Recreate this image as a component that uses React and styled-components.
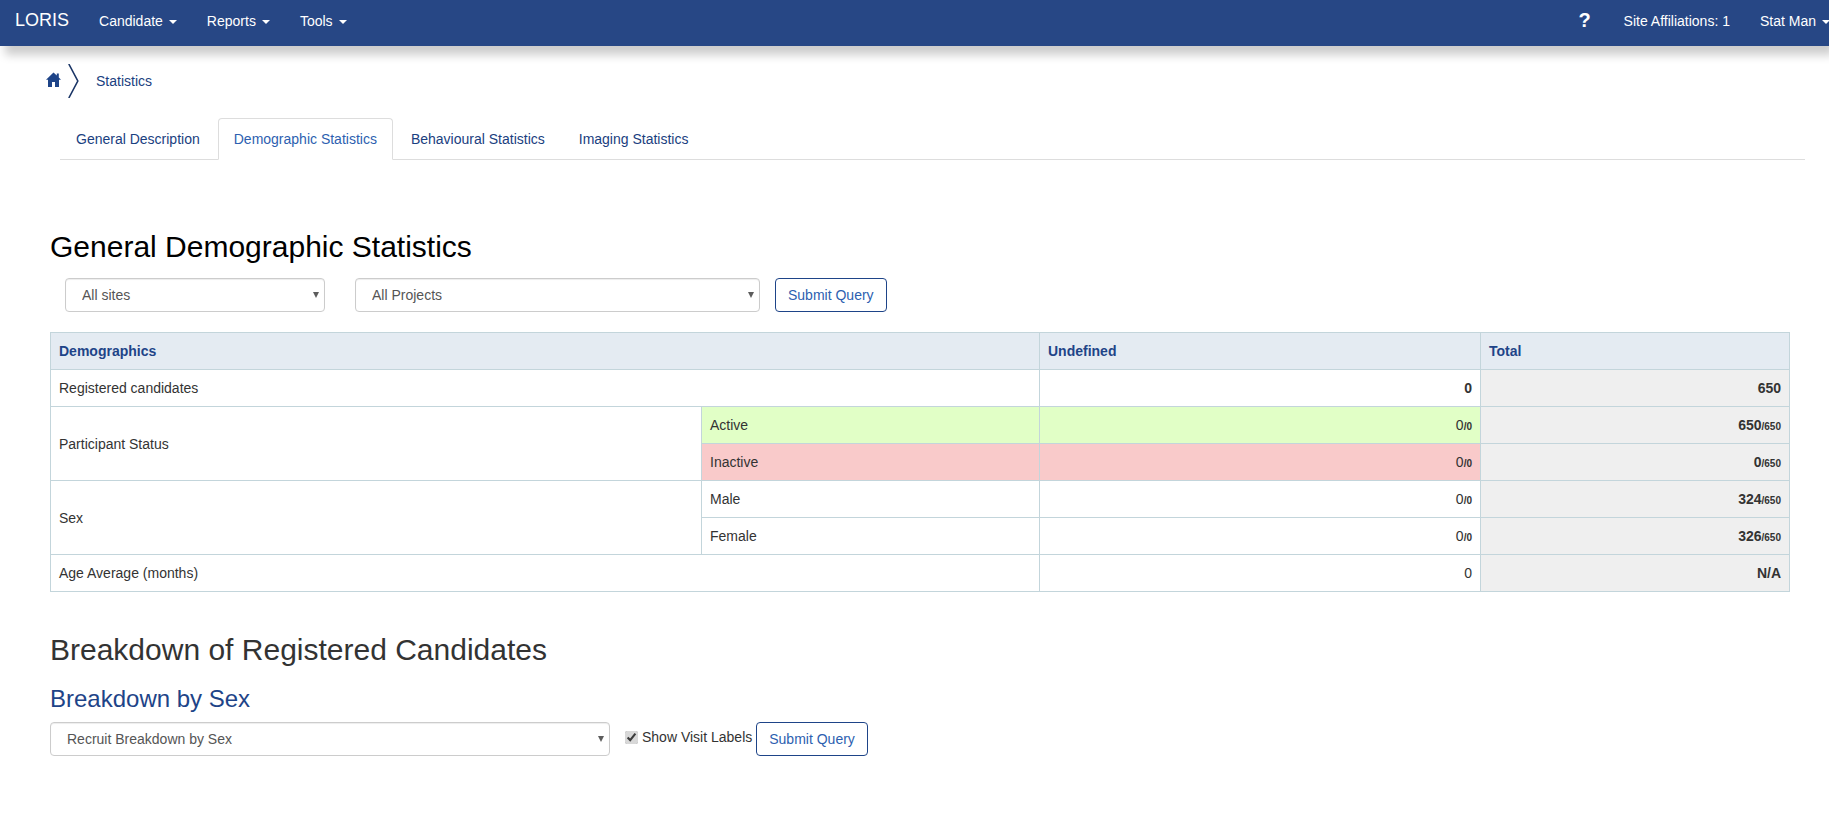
import React from 'react'
import styled, { createGlobalStyle } from 'styled-components'

const GlobalStyle = createGlobalStyle`
  html, body {
    margin: 0;
    padding: 0;
    background: #fff;
    overflow-x: hidden;
  }
  body {
    font-family: "Liberation Sans", Arial, sans-serif;
    font-size: 14px;
    line-height: 20px;
    color: #333;
  }
  * { box-sizing: border-box; }
`

const Page = styled.div`
  min-height: 820px;
  overflow: hidden;
`

const Navbar = styled.nav`
  display: flex;
  align-items: flex-start;
  justify-content: space-between;
  height: 46px;
  background: #274785;
  box-shadow: 5px 9px 9px rgba(0, 0, 0, 0.2);
  color: #fff;
`

const NavGroup = styled.div`
  display: flex;
  align-items: flex-start;
  margin-right: ${p => (p.$right ? '-16px' : '0')};
`

const Brand = styled.a`
  padding: 0 15px;
  font-size: 18px;
  line-height: 40px;
`

const NavLink = styled.a`
  display: block;
  padding: 0 15px;
  line-height: 42px;
  white-space: nowrap;
`

const HelpLink = styled(NavLink)`
  font-size: 20px;
  font-weight: 700;
  padding: 0 18px 0 0;
  line-height: 40px;
`

const Caret = styled.span`
  display: inline-block;
  width: 0;
  height: 0;
  margin-left: 6px;
  vertical-align: middle;
  border-top: 4px solid currentColor;
  border-left: 4px solid transparent;
  border-right: 4px solid transparent;
`

const Breadcrumb = styled.div`
  display: flex;
  align-items: center;
  height: 34px;
  margin: 18px 0 0 46px;
`

const HomeMark = styled.svg`
  margin-bottom: 3px;
`

const ChevronMark = styled.svg`
  margin-left: 7px;
`

const Crumb = styled.a`
  margin-left: 17px;
  color: #1a4080;
`

const Tabs = styled.ul`
  display: flex;
  list-style: none;
  margin: 20px 24px 0 60px;
  padding: 0;
  height: 42px;
  border-bottom: 1px solid #ddd;
`

const Tab = styled.li`
  height: 42px;
  padding: 10px 15px;
  margin-right: 2px;
  border: 1px solid ${p => (p.$active ? '#ddd' : 'transparent')};
  border-bottom-color: ${p => (p.$active ? '#fff' : 'transparent')};
  border-radius: 4px 4px 0 0;
  background: ${p => (p.$active ? '#fff' : 'transparent')};
  color: ${p => (p.$active ? '#2d5fb0' : '#1a4080')};
`

const Content = styled.main`
  padding: 0 38px 0 50px;
`

const Title = styled.h2`
  margin: ${p => p.$top}px 0 0;
  font-size: 30px;
  font-weight: 500;
  line-height: 33px;
  color: ${p => p.$color || '#000'};
`

const SubTitle = styled.h3`
  margin: 20px 0 0;
  font-size: 24px;
  font-weight: 500;
  line-height: 26px;
  color: #1e4488;
`

const FilterRow = styled.form`
  display: flex;
  align-items: center;
  margin-top: ${p => p.$top}px;
  padding-left: ${p => p.$indent || 0}px;
`

const SelectWrap = styled.div`
  position: relative;
  width: ${p => p.$width}px;
  margin-right: ${p => p.$gap}px;
  &::after {
    content: '';
    position: absolute;
    top: 14px;
    right: 6px;
    border-top: 6px solid #5c5c5c;
    border-left: 3px solid transparent;
    border-right: 3px solid transparent;
    pointer-events: none;
  }
`

const Select = styled.select`
  display: block;
  width: 100%;
  height: 34px;
  padding: 6px 16px;
  background: #fff;
  border: 1px solid #ccc;
  border-radius: 4px;
  box-shadow: inset 0 1px 1px rgba(0, 0, 0, 0.075);
  color: #555;
  font: 14px/20px "Liberation Sans", Arial, sans-serif;
  appearance: none;
`

const SubmitButton = styled.button`
  height: 34px;
  padding: 6px 12px;
  background: #fff;
  border: 1px solid #1e4488;
  border-radius: 4px;
  color: #2d5fb0;
  font: 14px/20px "Liberation Sans", Arial, sans-serif;
  white-space: nowrap;
`

const CheckLabel = styled.label`
  display: flex;
  align-items: center;
  margin-right: 4px;
  position: relative;
  top: -2px;
  white-space: nowrap;
`

const Check = styled.input`
  width: 13px;
  height: 13px;
  margin: 0 4px 0 0;
  accent-color: #d8d8d8;
`

const StatsTable = styled.table`
  width: 1739px;
  margin-top: 20px;
  table-layout: fixed;
  border-collapse: collapse;
`

const Column = styled.col`
  width: ${p => p.$width}px;
`

const HeadCell = styled.th`
  padding: 8px;
  background: #e4ebf2;
  border: 1px solid #c3d5db;
  color: #1e4488;
  font-weight: 700;
  text-align: left;
`

const rowColors = { active: '#e1ffc6', inactive: '#f9caca' }

const Cell = styled.td`
  padding: 8px;
  border: 1px solid #c3d5db;
  background: ${p => (p.$total ? '#efefef' : rowColors[p.$tone] || '#fff')};
  font-weight: ${p => (p.$total || p.$bold ? 700 : 400)};
  text-align: ${p => (p.$num ? 'right' : 'left')};
`

const Small = styled.small`
  font-size: 10px;
  font-weight: 700;
  line-height: 0;
`

function Fraction({ value, of }) {
  return <>{value}<Small>/{of}</Small></>
}

function HomeIcon() {
  return (
    <HomeMark width="15" height="15" viewBox="0 0 15 15" fill="#1e4488">
      <path d="M7.5 0.5 L10.8 3.6 V1.6 H12.8 V5.5 L15 7.8 H13 V15 H9 V10 H6 V15 H2 V7.8 H0 Z" />
    </HomeMark>
  )
}

function Chevron() {
  return (
    <ChevronMark width="11" height="34" viewBox="0 0 11 34" fill="none" stroke="#1a3566" strokeWidth="1.6">
      <path d="M0.8 0 L9.8 17 L0.8 34" />
    </ChevronMark>
  )
}

export default function App() {
  return (
    <Page>
      <GlobalStyle />
      <Navbar>
        <NavGroup>
          <Brand>LORIS</Brand>
          <NavLink>Candidate<Caret /></NavLink>
          <NavLink>Reports<Caret /></NavLink>
          <NavLink>Tools<Caret /></NavLink>
        </NavGroup>
        <NavGroup $right>
          <HelpLink>?</HelpLink>
          <NavLink>Site Affiliations: 1</NavLink>
          <NavLink>Stat Man<Caret /></NavLink>
        </NavGroup>
      </Navbar>

      <Breadcrumb>
        <HomeIcon />
        <Chevron />
        <Crumb>Statistics</Crumb>
      </Breadcrumb>

      <Tabs>
        <Tab>General Description</Tab>
        <Tab $active>Demographic Statistics</Tab>
        <Tab>Behavioural Statistics</Tab>
        <Tab>Imaging Statistics</Tab>
      </Tabs>

      <Content>
        <Title $top={70}>General Demographic Statistics</Title>
        <FilterRow $top={15} $indent={15}>
          <SelectWrap $width={260} $gap={30}><Select><option>All sites</option></Select></SelectWrap>
          <SelectWrap $width={405} $gap={15}><Select><option>All Projects</option></Select></SelectWrap>
          <SubmitButton type="button">Submit Query</SubmitButton>
        </FilterRow>

        <StatsTable>
          <colgroup>
            <Column $width={651} />
            <Column $width={338} />
            <Column $width={441} />
            <Column $width={309} />
          </colgroup>
          <thead>
            <tr>
              <HeadCell colSpan={2}>Demographics</HeadCell>
              <HeadCell>Undefined</HeadCell>
              <HeadCell>Total</HeadCell>
            </tr>
          </thead>
          <tbody>
            <tr>
              <Cell colSpan={2}>Registered candidates</Cell>
              <Cell $num $bold>0</Cell>
              <Cell $num $total>650</Cell>
            </tr>
            <tr>
              <Cell rowSpan={2}>Participant Status</Cell>
              <Cell $tone="active">Active</Cell>
              <Cell $num $tone="active"><Fraction value="0" of="0" /></Cell>
              <Cell $num $total><Fraction value="650" of="650" /></Cell>
            </tr>
            <tr>
              <Cell $tone="inactive">Inactive</Cell>
              <Cell $num $tone="inactive"><Fraction value="0" of="0" /></Cell>
              <Cell $num $total><Fraction value="0" of="650" /></Cell>
            </tr>
            <tr>
              <Cell rowSpan={2}>Sex</Cell>
              <Cell>Male</Cell>
              <Cell $num><Fraction value="0" of="0" /></Cell>
              <Cell $num $total><Fraction value="324" of="650" /></Cell>
            </tr>
            <tr>
              <Cell>Female</Cell>
              <Cell $num><Fraction value="0" of="0" /></Cell>
              <Cell $num $total><Fraction value="326" of="650" /></Cell>
            </tr>
            <tr>
              <Cell colSpan={2}>Age Average (months)</Cell>
              <Cell $num>0</Cell>
              <Cell $num $total>N/A</Cell>
            </tr>
          </tbody>
        </StatsTable>

        <Title $color="#333" $top={41}>Breakdown of Registered Candidates</Title>
        <SubTitle>Breakdown by Sex</SubTitle>
        <FilterRow $top={10}>
          <SelectWrap $width={560} $gap={15}><Select><option>Recruit Breakdown by Sex</option></Select></SelectWrap>
          <CheckLabel><Check type="checkbox" defaultChecked readOnly />Show Visit Labels</CheckLabel>
          <SubmitButton type="button">Submit Query</SubmitButton>
        </FilterRow>
      </Content>
    </Page>
  )
}
